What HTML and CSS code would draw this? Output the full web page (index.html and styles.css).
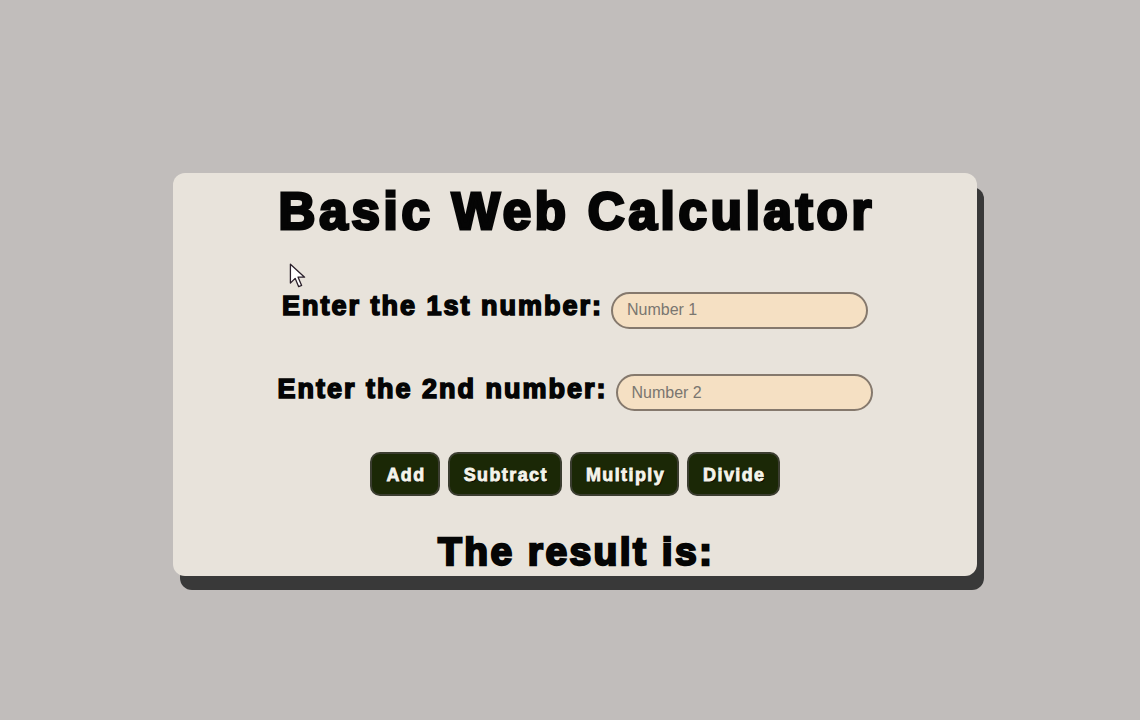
FILE: index.html
```html
<!DOCTYPE html>
<html lang="en">
<head>
<meta charset="utf-8">
<title>Basic Web Calculator</title>
<link rel="stylesheet" href="styles.css">
</head>
<body>
<div class="page">
  <div class="card">
    <h1 class="title">Basic Web Calculator</h1>
    <div class="row row-first">
      <label class="label" for="n1">Enter the 1st number:</label>
      <input class="field" id="n1" type="text" placeholder="Number 1">
    </div>
    <div class="row row-second">
      <label class="label" for="n2">Enter the 2nd number:</label>
      <input class="field" id="n2" type="text" placeholder="Number 2">
    </div>
    <div class="buttons">
      <button class="btn">Add</button>
      <button class="btn">Subtract</button>
      <button class="btn">Multiply</button>
      <button class="btn">Divide</button>
    </div>
    <h2 class="result">The result is:</h2>
  </div>
</div>
<svg class="cursor" width="17" height="26" viewBox="0 0 14 22" aria-hidden="true">
  <path d="M1 1 L1 17 L5 13 L8 20 L10.5 19 L7.5 12 L13 12 Z" fill="#ffffff" stroke="#2a1f2a" stroke-width="1.1" stroke-linejoin="round"/>
</svg>
</body>
</html>
```

FILE: styles.css
```css
html, body {
  margin: 0;
  padding: 0;
}

body {
  background: #c1bdbb;
  font-family: "Liberation Sans", Arial, sans-serif;
  min-height: 720px;
  position: relative;
}

.page {
  padding: 173px 0 0 10px;
}

.card {
  width: 804px;
  height: 403px;
  box-sizing: border-box;
  margin: 0 auto;
  background: #e8e3db;
  border-radius: 12px;
  box-shadow: 7px 14px 0 #393939;
  padding-top: 10px;
}

.title {
  margin: 0;
  font-size: 51px;
  line-height: 57px;
  font-weight: 700;
  color: #050505;
  text-align: center;
  letter-spacing: 3.8px;
  padding-left: 3.8px;
  -webkit-text-stroke: 3px #050505;
}

.row {
  display: flex;
  justify-content: center;
  align-items: baseline;
  gap: 8px;
}

.row-first {
  margin-top: 51px;
}

.row-second {
  margin-top: 45px;
}

.label {
  font-size: 27px;
  line-height: 30px;
  font-weight: 700;
  color: #050505;
  letter-spacing: 2px;
  -webkit-text-stroke: 1.6px #050505;
}

.field {
  width: 257px;
  height: 37px;
  box-sizing: border-box;
  border: 2.5px solid #85796d;
  border-radius: 19px;
  background: #f5e0c3;
  padding: 0 14px;
  font-family: "Liberation Sans", Arial, sans-serif;
  font-size: 16px;
  color: #333333;
  outline: none;
}

.field::placeholder {
  color: #7a7670;
}

.buttons {
  display: flex;
  justify-content: center;
  gap: 8px;
  margin-top: 41px;
}

.btn {
  height: 44px;
  box-sizing: border-box;
  border: 2px solid #3b3d30;
  border-radius: 10px;
  background: #1b2806;
  color: #f4f4ea;
  font-family: "Liberation Sans", Arial, sans-serif;
  font-size: 18px;
  font-weight: 700;
  letter-spacing: 1.4px;
  -webkit-text-stroke: 0.8px #f4f4ea;
  text-shadow: 1px 1px 1px #000000;
  padding: 2px 12px 0 14px;
  line-height: 21px;
}

.result {
  margin: 34px 0 0 0;
  font-size: 39px;
  line-height: 44px;
  font-weight: 700;
  color: #050505;
  text-align: center;
  letter-spacing: 2.4px;
  padding-left: 2.4px;
  -webkit-text-stroke: 2.3px #050505;
}

.cursor {
  position: absolute;
  left: 289px;
  top: 263px;
}
```
